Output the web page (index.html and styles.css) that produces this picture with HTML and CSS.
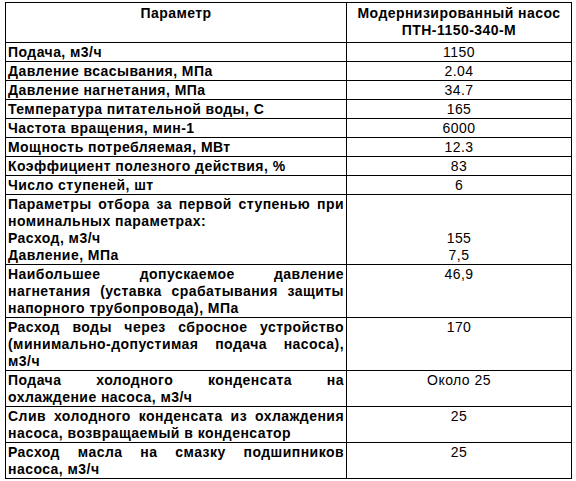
FILE: index.html
```html
<!DOCTYPE html>
<html lang="ru">
<head>
<meta charset="utf-8">
<link rel="stylesheet" href="styles.css">
</head>
<body>
<table class="spec">
  <colgroup><col class="c-param"><col class="c-val"></colgroup>
  <thead>
    <tr><th class="h-param">Параметр<br>&nbsp;</th><th class="h-val">Модернизированный насос<br>ПТН-1150-340-М</th></tr>
  </thead>
  <tbody>
    <tr><td class="p">Подача, м3/ч</td><td class="v">1150</td></tr>
    <tr><td class="p">Давление всасывания, МПа</td><td class="v">2.04</td></tr>
    <tr><td class="p">Давление нагнетания, МПа</td><td class="v">34.7</td></tr>
    <tr><td class="p">Температура питательной воды, С</td><td class="v">165</td></tr>
    <tr><td class="p">Частота вращения, мин-1</td><td class="v">6000</td></tr>
    <tr><td class="p">Мощность потребляемая, МВт</td><td class="v">12.3</td></tr>
    <tr><td class="p">Коэффициент полезного действия, %</td><td class="v">83</td></tr>
    <tr><td class="p">Число ступеней, шт</td><td class="v">6</td></tr>
    <tr><td class="p"><span class="j">Параметры отбора за первой ступенью при номинальных параметрах:</span>Расход, м3/ч<br>Давление, МПа</td><td class="v">&nbsp;<br>&nbsp;<br>155<br>7,5</td></tr>
    <tr><td class="p j">Наибольшее допускаемое давление нагнетания (уставка срабатывания защиты напорного трубопровода), МПа</td><td class="v">46,9</td></tr>
    <tr><td class="p j">Расход воды через сбросное устройство (минимально-допустимая подача насоса), м3/ч</td><td class="v">170</td></tr>
    <tr><td class="p j">Подача холодного конденсата на охлаждение насоса, м3/ч</td><td class="v">Около 25</td></tr>
    <tr><td class="p j">Слив холодного конденсата из охлаждения насоса, возвращаемый в конденсатор</td><td class="v">25</td></tr>
    <tr><td class="p j">Расход масла на смазку подшипников насоса, м3/ч</td><td class="v">25</td></tr>
  </tbody>
</table>
</body>
</html>
```
FILE: styles.css
```css
html, body {
  background: #ffffff;
}
body {
  margin: 2px 0 0 5px;
  font-family: "Liberation Sans", Arial, sans-serif;
  font-size: 14px;
  line-height: 17px;
  letter-spacing: 0.45px;
  color: #000000;
}
.spec {
  border-collapse: collapse;
  width: 566px;
  table-layout: fixed;
}
.c-param { width: 341px; }
.c-val { width: 225px; }
.spec th,
.spec td {
  border: 1px solid #000000;
  padding: 1px 2px 0 2px;
  vertical-align: top;
}
.spec th {
  font-weight: bold;
  text-align: center;
  padding-top: 2px;
  padding-bottom: 3px;
}
.p {
  font-weight: bold;
  text-align: left;
}
.j {
  display: block;
  text-align: justify;
}
td.j {
  display: table-cell;
}
.v {
  font-weight: normal;
  text-align: center;
}
```
